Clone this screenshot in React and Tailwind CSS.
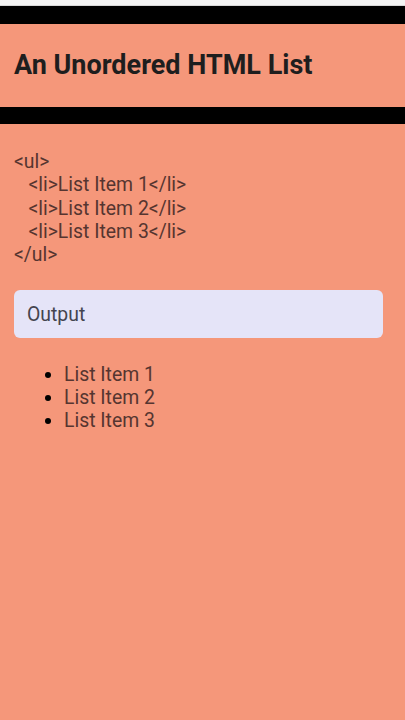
export default function App() {
  return (
    <div className="min-h-[720px] bg-[#f5977a] font-['Roboto',sans-serif] flex flex-col">
      <div className="h-[6px] bg-[#f4f4f4] border-b border-[#d8d8d8]" />
      <div className="h-[18px] bg-black" />
      <div className="h-[83px] flex items-center px-[14px]">
        <h1 className="text-[27px] font-bold text-[#1e1e1e]">An Unordered HTML List</h1>
      </div>
      <div className="h-[17px] bg-black" />
      <div className="pl-[14px] pr-[22px] pt-[26px]">
        <pre className="font-['Roboto',sans-serif] text-[19.4px] leading-[23.3px] text-[#553530] whitespace-pre">{`<ul>
   <li>List Item 1</li>
   <li>List Item 2</li>
   <li>List Item 3</li>
</ul>`}</pre>
        <div className="mt-[24px] h-[48px] rounded-[6px] bg-[#e5e4f8] flex items-center px-[13px]">
          <span className="text-[19.4px] text-[#44444f]">Output</span>
        </div>
        <ul className="list-disc pl-[50px] mt-[25px] text-[19.4px] leading-[23px] text-[#553530] marker:text-black">
          <li>List Item 1</li>
          <li>List Item 2</li>
          <li>List Item 3</li>
        </ul>
      </div>
    </div>
  );
}
